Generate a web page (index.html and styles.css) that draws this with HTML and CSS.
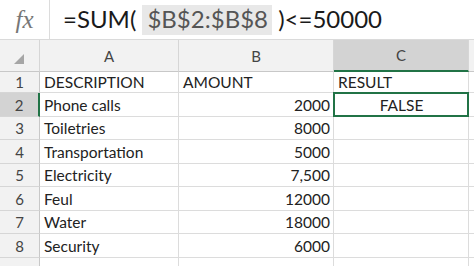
FILE: index.html
```html
<!DOCTYPE html>
<html>
<head>
<meta charset="utf-8">
<link rel="stylesheet" href="styles.css">
</head>
<body>
<div class="fbar">
  <div class="fx">fx</div>
  <div class="formula">=SUM( <span class="ref">$B$2:$B$8</span> )&lt;=50000</div>
</div>
<div class="grid">
  <div class="hd corner"><span class="tri"></span></div>
  <div class="hd col">A</div>
  <div class="hd col">B</div>
  <div class="hd col sel">C</div>
  <div class="hd col end"></div>

  <div class="rn">1</div><div class="c">DESCRIPTION</div><div class="c">AMOUNT</div><div class="c">RESULT</div><div class="c e"></div>
  <div class="rn selr">2</div><div class="c">Phone calls</div><div class="c num">2000</div><div class="c active">FALSE</div><div class="c e"></div>
  <div class="rn">3</div><div class="c">Toiletries</div><div class="c num">8000</div><div class="c"></div><div class="c e"></div>
  <div class="rn">4</div><div class="c">Transportation</div><div class="c num">5000</div><div class="c"></div><div class="c e"></div>
  <div class="rn">5</div><div class="c">Electricity</div><div class="c num">7,500</div><div class="c"></div><div class="c e"></div>
  <div class="rn">6</div><div class="c">Feul</div><div class="c num">12000</div><div class="c"></div><div class="c e"></div>
  <div class="rn">7</div><div class="c">Water</div><div class="c num">18000</div><div class="c"></div><div class="c e"></div>
  <div class="rn">8</div><div class="c">Security</div><div class="c num">6000</div><div class="c"></div><div class="c e"></div>
  <div class="rn"></div><div class="c"></div><div class="c"></div><div class="c"></div><div class="c e"></div>
</div>
</body>
</html>
```
FILE: styles.css
```css
html, body { margin: 0; padding: 0; background: #fff; }
body { width: 474px; height: 266px; overflow: hidden; font-family: "Lato", "Open Sans", sans-serif; color: #222; }
.fbar { height: 39px; border-bottom: 1px solid #dadada; display: flex; align-items: center; }
.fx { width: 50px; height: 39px; box-sizing: border-box; border-right: 1px solid #dcdcdc; display: flex; align-items: center; justify-content: center; font-family: "Liberation Serif", serif; font-style: italic; font-size: 25px; color: #777; }
.formula { padding-left: 13px; font-size: 24px; line-height: 30px; color: #1a1a1a; white-space: pre; }
.ref { background: #e8e8e8; color: #555; padding: 0 4px 2px 5px; display: inline-block; line-height: 28px; }
.grid { display: grid; grid-template-columns: 40px 139px 155px 135px 5px; grid-template-rows: 32px 21px 24px 23px 24px 23px 24px 23px 24px 10px; }
.hd { background: #f2f2f2; border-right: 1px solid #d6d6d6; border-bottom: 1px solid #c8c8c8; box-sizing: border-box; font-size: 15px; color: #444; display: flex; align-items: center; justify-content: center; }
.hd.sel { background: #d3d3d3; border-bottom: 2px solid #217346; }
.hd.end { border-right: none; }
.corner { position: relative; }
.tri { position: absolute; left: 14px; top: 14px; width: 0; height: 0; border-left: 10px solid transparent; border-bottom: 10px solid #a6a6a6; }
.rn { background: #f2f2f2; border-right: 1px solid #c8c8c8; border-bottom: 1px solid #d6d6d6; box-sizing: border-box; font-size: 15px; color: #444; display: flex; align-items: center; justify-content: center; }
.rn.selr { background: #d3d3d3; border-right: 2px solid #217346; }
.c { border-right: 1px solid #dcdcdc; border-bottom: 1px solid #dcdcdc; box-sizing: border-box; font-size: 15.5px; padding: 0 3px 0 4px; display: flex; align-items: center; white-space: nowrap; overflow: hidden; }
.c.e { border-right: none; padding: 0; }
.num { justify-content: flex-end; }
.active { border: 2px solid #217346; justify-content: center; margin: -1px 0 0 -1px; }
```
